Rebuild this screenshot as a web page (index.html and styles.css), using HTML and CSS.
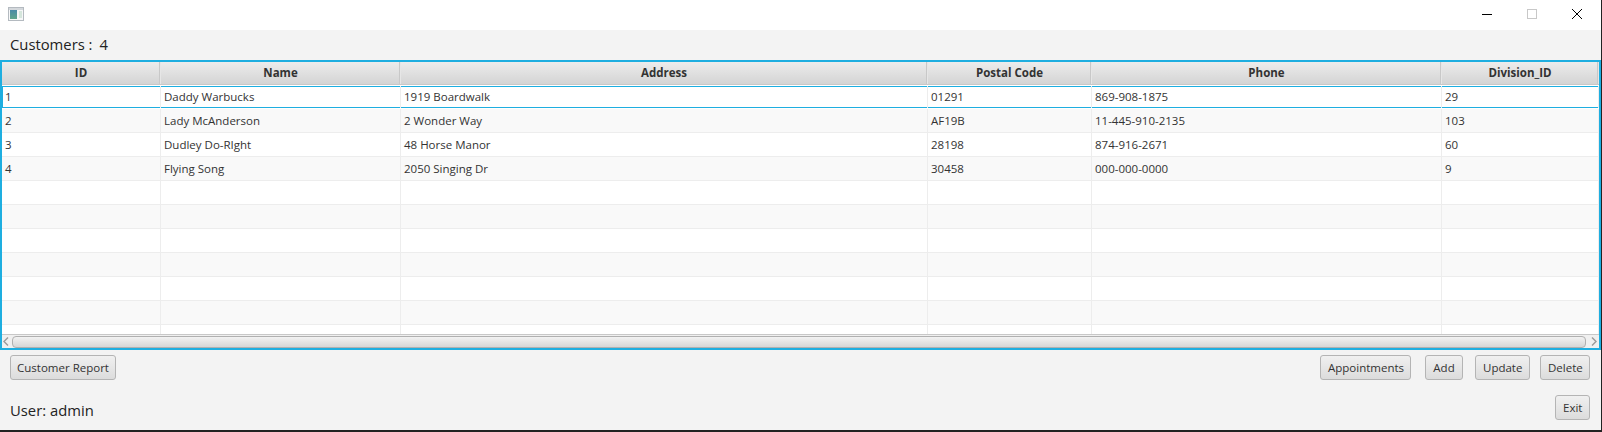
FILE: index.html
```html
<!DOCTYPE html>
<html>

<head>
    <meta charset="UTF-8">
    <link rel="stylesheet" href="styles.css">
    <title>Customers</title>
</head>

<body>
    <div class="window">
        <div class="titlebar">
            <svg class="app-icon" width="16" height="14" viewBox="0 0 16 14">
                <defs>
                    <linearGradient id="pane" x1="0" y1="0" x2="0" y2="1">
                        <stop offset="0" stop-color="#4a8aa8"/>
                        <stop offset="1" stop-color="#5fa58c"/>
                    </linearGradient>
                </defs>
                <rect x="0.5" y="0.5" width="15" height="13" fill="#f6f7f8" stroke="#b4bac0"/>
                <rect x="1" y="1" width="14" height="2" fill="#d4d8dc"/>
                <rect x="2" y="3" width="7" height="9" fill="url(#pane)"/>
                <rect x="11" y="4" width="3" height="7" fill="#d5e6dc"/>
            </svg>
            <div class="controls">
                <svg width="12" height="12" viewBox="0 0 12 12"><path d="M1 6.5H11" stroke="#000" fill="none"/></svg>
                <svg width="12" height="12" viewBox="0 0 12 12"><rect x="1.5" y="1.5" width="9" height="9" stroke="#c8c8c8" fill="none"/></svg>
                <svg width="12" height="12" viewBox="0 0 12 12"><path d="M1 1L11 11M11 1L1 11" stroke="#000" fill="none"/></svg>
            </div>
        </div>
        <div class="content">
            <div class="count"><span>Customers :</span><span>4</span></div>
            <div class="table-box">
                <div class="row head">
                    <div>ID</div>
                    <div>Name</div>
                    <div>Address</div>
                    <div>Postal Code</div>
                    <div>Phone</div>
                    <div>Division_ID</div>
                </div>
                <div class="rows">
                    <div class="row selected">
                        <div>1</div><div>Daddy Warbucks</div><div>1919 Boardwalk</div><div>01291</div><div>869-908-1875</div><div>29</div>
                    </div>
                    <div class="row odd">
                        <div>2</div><div>Lady McAnderson</div><div>2 Wonder Way</div><div>AF19B</div><div>11-445-910-2135</div><div>103</div>
                    </div>
                    <div class="row">
                        <div>3</div><div>Dudley Do-RIght</div><div>48 Horse Manor</div><div>28198</div><div>874-916-2671</div><div>60</div>
                    </div>
                    <div class="row odd">
                        <div>4</div><div>Flying Song</div><div>2050 Singing Dr</div><div>30458</div><div>000-000-0000</div><div>9</div>
                    </div>
                    <div class="row"><div></div><div></div><div></div><div></div><div></div><div></div></div>
                    <div class="row odd"><div></div><div></div><div></div><div></div><div></div><div></div></div>
                    <div class="row"><div></div><div></div><div></div><div></div><div></div><div></div></div>
                    <div class="row odd"><div></div><div></div><div></div><div></div><div></div><div></div></div>
                    <div class="row"><div></div><div></div><div></div><div></div><div></div><div></div></div>
                    <div class="row odd"><div></div><div></div><div></div><div></div><div></div><div></div></div>
                    <div class="row"><div></div><div></div><div></div><div></div><div></div><div></div></div>
                </div>
                <div class="scrollbar">
                    <svg width="6" height="9" viewBox="0 0 6 9"><path d="M5 0.5L1 4.5L5 8.5" stroke="#9a9a9a" stroke-width="1.4" fill="none"/></svg>
                    <div class="thumb"></div>
                    <svg width="6" height="9" viewBox="0 0 6 9"><path d="M1 0.5L5 4.5L1 8.5" stroke="#9a9a9a" stroke-width="1.4" fill="none"/></svg>
                </div>
            </div>
            <div class="actions">
                <button class="btn-report">Customer Report</button>
                <div class="actions-right">
                    <button class="btn-appointments">Appointments</button>
                    <button class="btn-add">Add</button>
                    <button class="btn-update">Update</button>
                    <button class="btn-delete">Delete</button>
                </div>
            </div>
            <div class="footer">
                <span>User: admin</span>
                <button class="btn-exit">Exit</button>
            </div>
        </div>
    </div>
</body>

</html>
```

FILE: styles.css
```css
html,
body {
    margin: 0;
    padding: 0;
    height: 432px;
    overflow: hidden;
    background-color: #222;
}

.window {
    width: 1601px;
    height: 430px;
    display: flex;
    flex-direction: column;
    font-family: 'Open Sans', 'Noto Sans', sans-serif;
    font-size: 11.5px;
    color: #333;
}

.titlebar {
    height: 30px;
    flex: none;
    box-sizing: border-box;
    background-color: #fff;
    display: flex;
    align-items: center;
    justify-content: space-between;
    padding: 0 0 2px 8px;
}

.controls {
    display: flex;
    gap: 33px;
    padding-right: 18px;
}

.content {
    flex: 1;
    display: flex;
    flex-direction: column;
    background-color: #f3f3f3;
}

.count {
    height: 30px;
    flex: none;
    box-sizing: border-box;
    display: flex;
    gap: 7px;
    align-items: center;
    padding: 0 0 3px 10px;
    font-size: 14.8px;
    color: #222;
}

.table-box {
    height: 290px;
    flex: none;
    display: flex;
    flex-direction: column;
    border: 2px solid #1eaee0;
    background-color: #fff;
    box-sizing: border-box;
}

.row {
    display: grid;
    grid-template-columns: 159px 240px 527px 164px 350px 1fr;
    height: 24px;
    box-sizing: border-box;
    border-bottom: 1px solid #ededed;
    flex: none;
}

.row > div {
    border-right: 1px solid #ededed;
    padding-left: 3px;
    line-height: 23px;
    white-space: nowrap;
}

.row.odd {
    background-color: #f9f9f9;
}

.row.selected {
    height: 22px;
    margin: 1px 0;
    border-bottom: none;
    box-shadow: inset 0 0 0 1px #1eaee0;
}

.row.selected > div {
    line-height: 21px;
}

.row.head {
    height: 23px;
    background: linear-gradient(#ececec, #d4d4d4);
    border-bottom: 1px solid #c8c8c8;
    font-weight: bold;
}

.row.head > div {
    text-align: center;
    padding-left: 0;
    border-right-color: #e6e6e6;
    box-shadow: inset -1px 0 0 #c8c8c8;
    line-height: 22px;
}

.rows {
    flex: 1;
    overflow: hidden;
}

.scrollbar {
    height: 14px;
    flex: none;
    box-sizing: border-box;
    display: flex;
    align-items: center;
    padding: 0 2px 0 1px;
    background-color: #f0f0f0;
    border-top: 1px solid #c8c8c8;
}

.thumb {
    flex: 1;
    height: 10px;
    margin: 0 5px 0 3px;
    border: 1px solid #b0b0b0;
    border-radius: 4px;
    background: linear-gradient(#f2f2f2, #d6d6d6);
}

.actions {
    display: flex;
    justify-content: space-between;
    padding: 5px 11px 0 10px;
}

.actions-right {
    display: flex;
}

button {
    height: 25px;
    padding: 0 7px;
    font-family: inherit;
    font-size: 11.5px;
    color: #333;
    border: 1px solid #b4b4b4;
    border-radius: 3px;
    background: linear-gradient(#f0f0f0, #dcdcdc);
}

.btn-report {
    width: 106px;
    padding: 0;
}

.btn-appointments {
    width: 91px;
    margin-right: 14px;
}

.btn-add {
    width: 38px;
    margin-right: 12px;
}

.btn-update {
    width: 55px;
    margin-right: 10px;
}

.btn-delete {
    width: 50px;
}

.btn-exit {
    width: 35px;
}

.footer {
    display: flex;
    justify-content: space-between;
    align-items: flex-end;
    padding: 0 11px 0 10px;
    margin-top: 15px;
    font-size: 14.8px;
    line-height: 20px;
    color: #222;
}
```
